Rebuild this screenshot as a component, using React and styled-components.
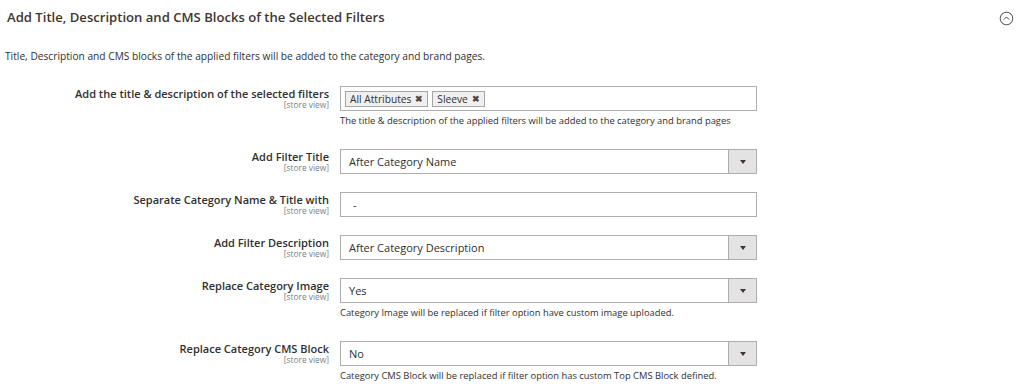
import React from "react";
import styled, { createGlobalStyle } from "styled-components";

const GlobalStyle = createGlobalStyle`
  body {
    margin: 0;
    background: #fff;
    font-family: "Open Sans", "Noto Sans", sans-serif;
    color: #303030;
  }
`;

const Section = styled.section`
  width: 1024px;
  padding: 7px 0 0;
`;

const Header = styled.div`
  display: flex;
  align-items: center;
  justify-content: space-between;
  padding: 0 10px 0 7px;
  height: 20px;
`;

const Title = styled.h2`
  margin: 0;
  font-size: 13.1px;
  font-weight: 600;
  color: #41362f;
`;

const Toggle = styled.button`
  display: flex;
  align-items: center;
  justify-content: center;
  width: 16px;
  height: 16px;
  margin-top: 2px;
  padding: 0;
  border: none;
  background: none;
  cursor: pointer;
`;

const Intro = styled.p`
  margin: 22px 0 0 5px;
  font-size: 10.2px;
  line-height: 14px;
  color: #303030;
`;

const Fields = styled.div`
  display: flex;
  flex-direction: column;
  margin-top: 23px;
`;

const Row = styled.div`
  display: grid;
  grid-template-columns: 329px 417px;
  column-gap: 11px;
  margin-bottom: ${(p) => (p.$hasNote ? 22 : 18)}px;
`;

const LabelCell = styled.div`
  text-align: right;
  padding-top: 1px;
`;

const Label = styled.div`
  font-size: 11px;
  font-weight: 600;
  line-height: 13px;
  color: #303030;
`;

const Scope = styled.div`
  font-size: 8.4px;
  line-height: 10px;
  color: #808080;
`;

const Control = styled.div`
  display: flex;
  flex-direction: column;
`;

const Box = styled.div`
  display: flex;
  align-items: center;
  height: 25px;
  box-sizing: border-box;
  border: 1px solid #adadad;
  background: #fff;
  font-size: 11px;
  color: #303030;
`;

const Value = styled.span`
  flex: 1;
  padding: 0 ${(p) => (p.$dash ? 12 : 8)}px;
`;

const Arrow = styled.span`
  display: flex;
  align-items: center;
  justify-content: center;
  width: 27px;
  align-self: stretch;
  background: #e3e3e3;
  border-left: 1px solid #adadad;

  &::after {
    content: "";
    border-left: 3px solid transparent;
    border-right: 3px solid transparent;
    border-top: 4px solid #41362f;
  }
`;

const Tags = styled.div`
  display: flex;
  gap: 4px;
  padding: 0 4px;
`;

const Tag = styled.span`
  display: inline-flex;
  align-items: center;
  gap: 4px;
  height: 16px;
  padding: 0 4px;
  box-sizing: border-box;
  background: #f0f0f0;
  border: 1px solid #a6a6a6;
  font-size: 10.2px;
  color: #303030;

  b {
    font-size: 8.5px;
    color: #514943;
  }
`;

const Note = styled.div`
  margin-top: 3px;
  font-size: 9.4px;
  line-height: 13px;
  color: #303030;
`;

const CollapseIcon = () => (
  <svg width="15" height="15" viewBox="0 0 15 15">
    <circle cx="7.5" cy="7.5" r="6.3" fill="none" stroke="#514943" strokeWidth="1" />
    <path d="M4.8 8.6 L7.5 5.9 L10.2 8.6" fill="none" stroke="#514943" strokeWidth="1" />
  </svg>
);

const fields = [
  {
    label: "Add the title & description of the selected filters",
    type: "tags",
    tags: ["All Attributes", "Sleeve"],
    note: "The title & description of the applied filters will be added to the category and brand pages",
  },
  { label: "Add Filter Title", type: "select", value: "After Category Name" },
  { label: "Separate Category Name & Title with", type: "input", value: "-" },
  { label: "Add Filter Description", type: "select", value: "After Category Description" },
  {
    label: "Replace Category Image",
    type: "select",
    value: "Yes",
    note: "Category Image will be replaced if filter option have custom image uploaded.",
  },
  {
    label: "Replace Category CMS Block",
    type: "select",
    value: "No",
    note: "Category CMS Block will be replaced if filter option has custom Top CMS Block defined.",
  },
];

const FieldControl = ({ field }) => {
  if (field.type === "tags") {
    return (
      <Box>
        <Tags>
          {field.tags.map((t) => (
            <Tag key={t}>
              {t} <b>✖</b>
            </Tag>
          ))}
        </Tags>
      </Box>
    );
  }
  return (
    <Box>
      <Value $dash={field.type === "input"}>{field.value}</Value>
      {field.type === "select" && <Arrow />}
    </Box>
  );
};

export default function App() {
  return (
    <>
      <GlobalStyle />
      <Section>
        <Header>
          <Title>Add Title, Description and CMS Blocks of the Selected Filters</Title>
          <Toggle aria-label="Collapse">
            <CollapseIcon />
          </Toggle>
        </Header>
        <Intro>
          Title, Description and CMS blocks of the applied filters will be added to the category and brand pages.
        </Intro>
        <Fields>
          {fields.map((f) => (
            <Row key={f.label} $hasNote={!!f.note}>
              <LabelCell>
                <Label>{f.label}</Label>
                <Scope>[store view]</Scope>
              </LabelCell>
              <Control>
                <FieldControl field={f} />
                {f.note && <Note>{f.note}</Note>}
              </Control>
            </Row>
          ))}
        </Fields>
      </Section>
    </>
  );
}
